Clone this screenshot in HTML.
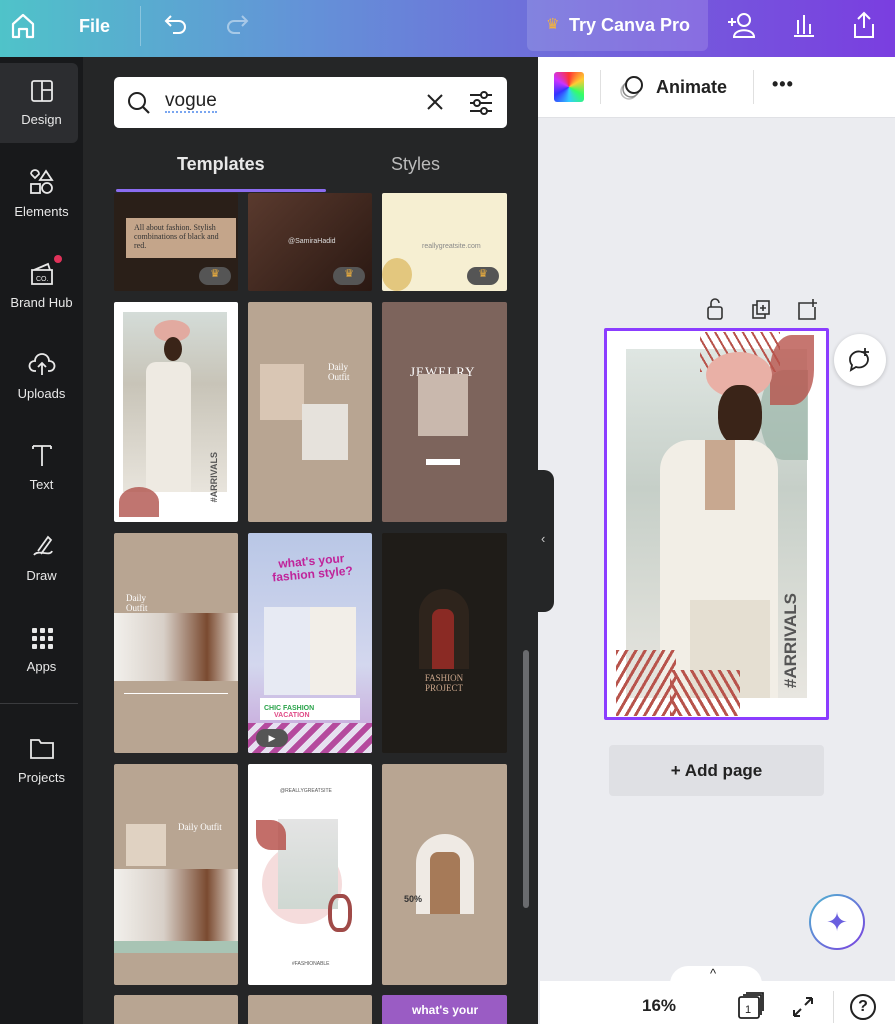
<!DOCTYPE html>
<html><head><style>
*{box-sizing:border-box;margin:0;padding:0}
body{width:895px;height:1024px;overflow:hidden;font-family:"Liberation Sans",sans-serif;background:#ebecf0;position:relative}
.a{position:absolute}
.top{left:0;top:0;width:895px;height:57px;background:linear-gradient(90deg,#4fc3c9 0%,#6491d8 35%,#7360db 70%,#7a3ee0 100%);color:#fff}
.side{left:0;top:57px;width:83px;height:967px;background:#18191b}
.si{position:absolute;left:0;width:83px;text-align:center;color:#e8e8e8;font-size:13px}
.si div{margin-top:6px}
.panel{left:83px;top:57px;width:455px;height:967px;background:#252627}
.t{position:absolute;border-radius:2px;overflow:hidden}
.ic{stroke:#e8e8e8;fill:none;stroke-width:1.8}
</style></head><body>
<div class="a top">
<svg class="a" style="left:10px;top:12px" width="26" height="28" viewBox="0 0 26 28"><path d="M3 12 L13 3 L23 12 V25 H17 V17 H9 V25 H3 Z" fill="none" stroke="#fff" stroke-width="2.2" stroke-linejoin="round"/></svg>
<div class="a" style="left:79px;top:16px;font-size:18px;font-weight:bold">File</div>
<div class="a" style="left:140px;top:6px;width:1px;height:40px;background:rgba(255,255,255,.3)"></div>
<svg class="a" style="left:163px;top:13px" width="28" height="24" viewBox="0 0 28 24"><path d="M8 3 L3 8 L8 13 M3 8 H16 A6 6 0 0 1 16 20 H10" fill="none" stroke="#fff" stroke-width="2"/></svg>
<svg class="a" style="left:222px;top:13px" width="28" height="24" viewBox="0 0 28 24" opacity=".45"><path d="M20 3 L25 8 L20 13 M25 8 H12 A6 6 0 0 0 12 20 H18" fill="none" stroke="#fff" stroke-width="2"/></svg>
<div class="a" style="left:527px;top:0;width:181px;height:51px;background:rgba(255,255,255,.14);border-radius:0 0 6px 6px"></div>
<div class="a" style="left:546px;top:15px;color:#f4b33d;font-size:15px">♛</div>
<div class="a" style="left:569px;top:15px;font-size:18px;font-weight:bold">Try Canva Pro</div>
<svg class="a" style="left:726px;top:10px" width="34" height="30" viewBox="0 0 34 30"><circle cx="18" cy="10" r="6" fill="none" stroke="#fff" stroke-width="2"/><path d="M8 27 C8 18 28 18 28 27 Z M2 12 H10 M6 8 V16" fill="none" stroke="#fff" stroke-width="2"/></svg>
<svg class="a" style="left:790px;top:12px" width="28" height="26"><path d="M4 24 H24 M8 22 V8 M14 22 V3 M20 22 V12" stroke="#fff" stroke-width="2"/></svg>
<svg class="a" style="left:850px;top:10px" width="28" height="30"><path d="M14 18 V3 M8 9 L14 3 L20 9 M5 14 V27 H23 V14" fill="none" stroke="#fff" stroke-width="2"/></svg>
</div>
<div class="a side">
<div class="a" style="left:0;top:6px;width:78px;height:80px;background:#2c2d30;border-radius:0 6px 6px 0"></div>
<div class="si" style="top:22px"><svg width="24" height="24"><rect x="2" y="2" width="20" height="20" rx="2" class="ic"/><path d="M12 2 V22 M12 11 H22" class="ic"/></svg><div>Design</div></div>
<div class="si" style="top:112px"><svg width="28" height="26"><path d="M3 5 L7 9 L11 5 A2 2 0 0 0 3 5 M18 2 L24 11 H12 Z" class="ic"/><rect x="3" y="15" width="9" height="9" class="ic"/><circle cx="19" cy="19" r="5" class="ic"/></svg><div>Elements</div></div>
<div class="si" style="top:203px"><svg width="28" height="26"><path d="M4 10 H24 V24 H4 Z M6 10 L20 4 L22 10" class="ic"/><text x="8" y="21" font-size="7" fill="#e8e8e8">CO.</text></svg><div>Brand Hub</div></div>
<div class="a" style="left:54px;top:198px;width:8px;height:8px;border-radius:50%;background:#e0325a"></div>
<div class="si" style="top:294px"><svg width="28" height="26"><path d="M8 20 H6 A5 5 0 0 1 7 10 A7 7 0 0 1 21 10 A5 5 0 0 1 22 20 H20 M14 24 V12 M10 16 L14 12 L18 16" class="ic"/></svg><div>Uploads</div></div>
<div class="si" style="top:385px"><svg width="28" height="26"><path d="M5 4 H23 M14 4 V24 M5 4 V7 M23 4 V7" class="ic"/></svg><div>Text</div></div>
<div class="si" style="top:476px"><svg width="28" height="26"><path d="M6 22 C10 16 22 24 24 18 M10 18 L20 4 L23 7 L13 21" class="ic"/></svg><div>Draw</div></div>
<div class="si" style="top:567px"><svg width="28" height="26" fill="#e8e8e8"><rect x="4" y="4" width="5" height="5" rx="1"/><rect x="12" y="4" width="5" height="5" rx="1"/><rect x="20" y="4" width="5" height="5" rx="1"/><rect x="4" y="12" width="5" height="5" rx="1"/><rect x="12" y="12" width="5" height="5" rx="1"/><rect x="20" y="12" width="5" height="5" rx="1"/><rect x="4" y="20" width="5" height="5" rx="1"/><rect x="12" y="20" width="5" height="5" rx="1"/><rect x="20" y="20" width="5" height="5" rx="1"/></svg><div>Apps</div></div>
<div class="a" style="left:0;top:646px;width:78px;height:1px;background:#3a3b3e"></div>
<div class="si" style="top:678px"><svg width="28" height="26"><path d="M3 5 H11 L13 8 H25 V23 H3 Z" class="ic"/></svg><div>Projects</div></div>
</div>
<div class="a panel">
<div class="a" style="left:31px;top:20px;width:393px;height:51px;background:#fff;border-radius:5px"></div>
<svg class="a" style="left:43px;top:33px" width="26" height="26"><circle cx="11" cy="11" r="8" fill="none" stroke="#222" stroke-width="2"/><path d="M17 17 L23 23" stroke="#222" stroke-width="2.2"/></svg>
<div class="a" style="left:82px;top:34px;font-size:19px;color:#222;border-bottom:2px dotted #7aa6f0;line-height:20px">vogue</div>
<svg class="a" style="left:342px;top:35px" width="20" height="20"><path d="M3 3 L17 17 M17 3 L3 17" stroke="#222" stroke-width="2"/></svg>
<svg class="a" style="left:385px;top:33px" width="26" height="26"><path d="M2 5 H24 M2 13 H24 M2 21 H24" stroke="#222" stroke-width="2"/><circle cx="16" cy="5" r="3" fill="#fff" stroke="#222" stroke-width="2"/><circle cx="9" cy="13" r="3" fill="#fff" stroke="#222" stroke-width="2"/><circle cx="16" cy="21" r="3" fill="#fff" stroke="#222" stroke-width="2"/></svg>
<div class="a" style="left:94px;top:97px;font-size:18px;font-weight:bold;color:#e8e8e8">Templates</div>
<div class="a" style="left:308px;top:97px;font-size:18px;color:#bbb">Styles</div>
<div class="a" style="left:33px;top:132px;width:210px;height:3px;background:#8b6cf0;border-radius:2px"></div>
<div class="a" style="left:0;top:136px;width:455px;height:831px;overflow:hidden">
<div class="t" style="left:31px;top:0;width:124px;height:98px;background:#2a1f18"><div class="a" style="left:12px;top:25px;width:110px;height:40px;background:#c4a58a;font:8px 'Liberation Serif',serif;color:#333;padding:5px 8px">All about fashion. Stylish combinations of black and red.</div><div class="a" style="left:85px;top:74px;width:32px;height:18px;border-radius:9px;background:#555;color:#f4b33d;font-size:11px;text-align:center">♛</div></div>
<div class="t" style="left:165px;top:0;width:124px;height:98px;background:linear-gradient(135deg,#5a3a2e,#2a1812)"><div class="a" style="left:40px;top:45px;color:#ddd;font-size:7px">@SamiraHadid</div><div class="a" style="left:85px;top:74px;width:32px;height:18px;border-radius:9px;background:#555;color:#f4b33d;font-size:11px;text-align:center">♛</div></div>
<div class="t" style="left:299px;top:0;width:125px;height:98px;background:#f6efd2"><div class="a" style="left:40px;top:50px;color:#888;font-size:7px">reallygreatsite.com</div><div class="a" style="left:0;top:65px;width:30px;height:33px;background:#e3c77e;border-radius:50%"></div><div class="a" style="left:85px;top:74px;width:32px;height:18px;border-radius:9px;background:#555;color:#f4b33d;font-size:11px;text-align:center">♛</div></div>
<div class="t" style="left:31px;top:109px;width:124px;height:220px;background:#fff"><div class="a" style="left:9px;top:10px;width:104px;height:180px;background:linear-gradient(180deg,#d4dcd8,#c8c4b8 40%,#e8e4dc)"></div><div class="a" style="left:40px;top:18px;width:36px;height:22px;border-radius:50%;background:#e2aaa0"></div><div class="a" style="left:50px;top:35px;width:18px;height:24px;border-radius:50%;background:#3a2418"></div><div class="a" style="left:32px;top:60px;width:45px;height:130px;background:#eeeae2;border-radius:10px 10px 0 0"></div><div class="a" style="left:95px;top:150px;color:#555;font-size:9px;font-weight:bold;writing-mode:vertical-rl;transform:rotate(180deg)">#ARRIVALS</div><div class="a" style="left:5px;top:185px;width:40px;height:30px;background:#b0524c;border-radius:50% 50% 0 0;opacity:.8"></div></div>
<div class="t" style="left:165px;top:109px;width:124px;height:220px;background:#b8a592"><div class="a" style="left:80px;top:60px;font:9px 'Liberation Serif',serif;color:#fff">Daily<br>Outfit</div><div class="a" style="left:12px;top:62px;width:44px;height:56px;background:#d9c6b4"></div><div class="a" style="left:54px;top:102px;width:46px;height:56px;background:#e6e2dc"></div></div>
<div class="t" style="left:299px;top:109px;width:125px;height:220px;background:#7d645c"><div class="a" style="left:28px;top:62px;font:13px 'Liberation Serif',serif;color:#fff;letter-spacing:1px">JEWELRY</div><div class="a" style="left:36px;top:72px;width:50px;height:62px;background:#c9b8ad"></div><div class="a" style="left:44px;top:157px;width:34px;height:6px;background:#fff"></div></div>
<div class="t" style="left:31px;top:340px;width:124px;height:220px;background:#b8a592"><div class="a" style="left:12px;top:60px;font:9px 'Liberation Serif',serif;color:#fff">Daily<br>Outfit</div><div class="a" style="left:0;top:80px;width:124px;height:68px;background:linear-gradient(90deg,#f2f0ec,#d8d0c8 40%,#7a4a30 75%,#ede8e0)"></div><div class="a" style="left:10px;top:160px;width:104px;height:1px;background:#fff"></div></div>
<div class="t" style="left:165px;top:340px;width:124px;height:220px;background:linear-gradient(180deg,#b9c7e6,#d3d7ee 60%,#c6a0d8)"><div class="a" style="left:14px;top:22px;width:100px;text-align:center;color:#c0239a;font-size:12px;font-weight:bold;line-height:13px;transform:rotate(-5deg)">what's your fashion style?</div><div class="a" style="left:16px;top:74px;width:46px;height:88px;background:#e7eaf3"></div><div class="a" style="left:62px;top:74px;width:46px;height:88px;background:#f2eee8"></div><div class="a" style="left:12px;top:165px;width:100px;height:22px;background:#fff;font-size:7px;font-weight:bold;color:#2aa34a;padding:7px 4px">CHIC FASHION <span style="color:#e04a86;margin-left:10px">VACATION</span></div><div class="a" style="left:0;top:190px;width:124px;height:30px;background:repeating-linear-gradient(135deg,#b54a9e 0 6px,#e6e0f0 6px 12px)"></div><div class="a" style="left:8px;top:196px;width:32px;height:18px;border-radius:9px;background:#555;color:#fff;font-size:9px;text-align:center;line-height:18px">▶</div></div>
<div class="t" style="left:299px;top:340px;width:125px;height:220px;background:#1f1c18"><div class="a" style="left:37px;top:56px;width:50px;height:80px;background:#2e241c;border-radius:25px 25px 0 0"></div><div class="a" style="left:50px;top:76px;width:22px;height:60px;background:#8a2a24;border-radius:8px 8px 0 0"></div><div class="a" style="left:30px;top:140px;width:64px;text-align:center;font:9px 'Liberation Serif',serif;color:#c9a58a">FASHION<br>PROJECT</div></div>
<div class="t" style="left:31px;top:571px;width:124px;height:221px;background:#b8a592"><div class="a" style="left:12px;top:60px;width:40px;height:42px;background:#e0d2c2"></div><div class="a" style="left:64px;top:58px;font:9px 'Liberation Serif',serif;color:#fff">Daily Outfit</div><div class="a" style="left:0;top:105px;width:124px;height:72px;background:linear-gradient(90deg,#f2f0ec,#d8d0c8 40%,#7a4a30 75%,#ede8e0)"></div><div class="a" style="left:0;top:177px;width:124px;height:12px;background:#a8c4b4"></div></div>
<div class="t" style="left:165px;top:571px;width:124px;height:221px;background:#fff"><div class="a" style="left:32px;top:24px;font-size:5px;color:#555">@REALLYGREATSITE</div><div class="a" style="left:14px;top:80px;width:80px;height:80px;border-radius:50%;background:#f5dcdc"></div><div class="a" style="left:30px;top:55px;width:60px;height:90px;background:linear-gradient(180deg,#e4e4e4,#cfd8d2)"></div><div class="a" style="left:8px;top:56px;width:30px;height:30px;background:#b44a44;border-radius:0 50%;opacity:.8"></div><div class="a" style="left:80px;top:130px;width:24px;height:38px;border:4px solid #a04a48;border-radius:40%"></div><div class="a" style="left:44px;top:197px;font-size:5px;color:#555">#FASHIONABLE</div></div>
<div class="t" style="left:299px;top:571px;width:125px;height:221px;background:#b8a592"><div class="a" style="left:34px;top:70px;width:58px;height:80px;border-radius:29px 29px 0 0;background:#efeae4"></div><div class="a" style="left:48px;top:88px;width:30px;height:62px;background:#a67a58;border-radius:8px 8px 0 0"></div><div class="a" style="left:22px;top:130px;font-size:9px;font-weight:bold;color:#333">50%</div></div>
<div class="t" style="left:31px;top:802px;width:124px;height:40px;background:#b8a592"></div>
<div class="t" style="left:165px;top:802px;width:124px;height:40px;background:#b8a592"></div>
<div class="t" style="left:299px;top:802px;width:125px;height:40px;background:#9a5cc4"><div class="a" style="left:30px;top:8px;color:#fff;font-size:12px;font-weight:bold">what's your</div></div>
</div>
<div class="a" style="left:440px;top:593px;width:6px;height:258px;border-radius:3px;background:#6a6b6e"></div>
</div>
<div class="a" style="left:538px;top:57px;width:357px;height:61px;background:#fff;border-bottom:1px solid #e0e1e5"></div>
<div class="a" style="left:538px;top:470px;width:16px;height:142px;background:#252627;border-radius:0 10px 10px 0"></div>
<div class="a" style="left:541px;top:531px;color:#ccc;font-size:13px">‹</div>
<div class="a" style="left:554px;top:72px;width:30px;height:30px;border-radius:3px;background:conic-gradient(from 0deg,#f33,#fc3,#3f6,#3cf,#33f,#c3f,#f33)"></div>
<div class="a" style="left:600px;top:70px;width:1px;height:34px;background:#e0e0e0"></div>
<svg class="a" style="left:617px;top:72px" width="30" height="30"><circle cx="12" cy="19" r="8" fill="none" stroke="#bbb" stroke-width="1.5"/><circle cx="14" cy="17" r="8" fill="#fff" stroke="#888" stroke-width="1.5"/><circle cx="17" cy="13" r="8" fill="#fff" stroke="#222" stroke-width="2"/></svg>
<div class="a" style="left:656px;top:77px;font-size:18px;font-weight:bold;color:#222">Animate</div>
<div class="a" style="left:753px;top:70px;width:1px;height:34px;background:#e0e0e0"></div>
<div class="a" style="left:772px;top:74px;font-size:18px;font-weight:bold;color:#222;letter-spacing:1px">•••</div>
<svg class="a" style="left:703px;top:297px" width="130" height="26" fill="none" stroke="#333" stroke-width="1.6"><rect x="5" y="10" width="14" height="12" rx="2"/><path d="M8 10 V6 A4 4 0 0 1 16 6"/><rect x="50" y="8" width="12" height="13"/><rect x="54" y="4" width="12" height="13" fill="#ebecf0"/><path d="M60 8 V14 M57 11 H63"/><path d="M108 6 H96 V22 H112 V10 M110 2 V10 M106 6 H114"/></svg>
<div class="a" style="left:604px;top:328px;width:225px;height:392px;border:3px solid #8b3dff;border-radius:2px;background:#fff;overflow:hidden">
<div class="a" style="left:19px;top:18px;width:181px;height:349px;background:linear-gradient(180deg,#dfe6e2,#c6cfc8 40%,#e8e6e0)"></div>
<div class="a" style="left:153px;top:39px;width:48px;height:90px;background:#9ab5a8;border-radius:50% 0 0 50%;opacity:.7"></div>
<div class="a" style="left:93px;top:1px;width:80px;height:40px;background:repeating-linear-gradient(60deg,#b8544c 0 2px,transparent 2px 8px)"></div>
<div class="a" style="left:163px;top:4px;width:44px;height:70px;background:#b8544c;border-radius:50% 0;opacity:.8"></div>
<div class="a" style="left:99px;top:21px;width:66px;height:46px;border-radius:50%;background:#e9b0a6"></div>
<div class="a" style="left:111px;top:54px;width:44px;height:60px;border-radius:45%;background:#3a2418"></div>
<div class="a" style="left:53px;top:109px;width:118px;height:258px;background:#f2eee6;border-radius:30px 30px 0 0"></div>
<div class="a" style="left:98px;top:109px;width:30px;height:70px;background:#c8a890"></div>
<div class="a" style="left:83px;top:269px;width:80px;height:98px;background:#e5dfd2"></div>
<div class="a" style="left:174px;top:262px;font-size:17px;font-weight:bold;color:#555;writing-mode:vertical-rl;transform:rotate(180deg)">#ARRIVALS</div>
<div class="a" style="left:9px;top:319px;width:60px;height:66px;background:repeating-linear-gradient(120deg,#b8544c 0 3px,transparent 3px 8px)"></div>
<div class="a" style="left:63px;top:339px;width:70px;height:46px;background:repeating-linear-gradient(60deg,#b8544c 0 3px,transparent 3px 8px)"></div>
</div>
<div class="a" style="left:834px;top:334px;width:52px;height:52px;border-radius:50%;background:#fff;box-shadow:0 1px 4px rgba(0,0,0,.2)"></div>
<svg class="a" style="left:846px;top:346px" width="28" height="28" fill="none" stroke="#222" stroke-width="1.8"><path d="M4 14 A9 8 0 1 1 10 21 L5 24 L6 19 A8 8 0 0 1 4 14 M19 2 V10 M15 6 H23"/></svg>
<div class="a" style="left:609px;top:745px;width:215px;height:51px;background:#dfe0e4;border-radius:4px;text-align:center;line-height:51px;font-size:17px;font-weight:bold;color:#222">+ Add page</div>
<div class="a" style="left:809px;top:894px;width:56px;height:56px;border-radius:50%;background:linear-gradient(135deg,#4fb8d0,#7a3ee0);padding:2px"><div style="width:52px;height:52px;border-radius:50%;background:#fff;text-align:center;line-height:52px;font-size:26px;color:#6a5fdf">✦</div></div>
<div class="a" style="left:540px;top:981px;width:355px;height:43px;background:#fff"></div>
<div class="a" style="left:670px;top:966px;width:92px;height:20px;background:#fff;border-radius:18px 18px 0 0"></div>
<div class="a" style="left:710px;top:966px;font-size:13px;color:#222">^</div>
<div class="a" style="left:642px;top:996px;font-size:17px;font-weight:bold;color:#222">16%</div>
<svg class="a" style="left:737px;top:991px" width="30" height="30" fill="none" stroke="#222" stroke-width="1.8"><rect x="2" y="6" width="20" height="21" rx="2"/><path d="M6 4 H24 V24 M9 2 H26 V20" /><text x="8" y="22" font-size="11" fill="#222" stroke="none" font-family="Liberation Sans">1</text></svg>
<svg class="a" style="left:790px;top:994px" width="26" height="26" fill="none" stroke="#222" stroke-width="2"><path d="M4 22 L11 15 M4 22 V16 M4 22 H10 M22 4 L15 11 M22 4 V10 M22 4 H16"/></svg>
<div class="a" style="left:833px;top:991px;width:1px;height:32px;background:#ddd"></div>
<div class="a" style="left:850px;top:994px;width:26px;height:26px;border:2px solid #222;border-radius:50%;text-align:center;line-height:22px;font-size:16px;font-weight:bold;color:#222">?</div>
</body></html>
